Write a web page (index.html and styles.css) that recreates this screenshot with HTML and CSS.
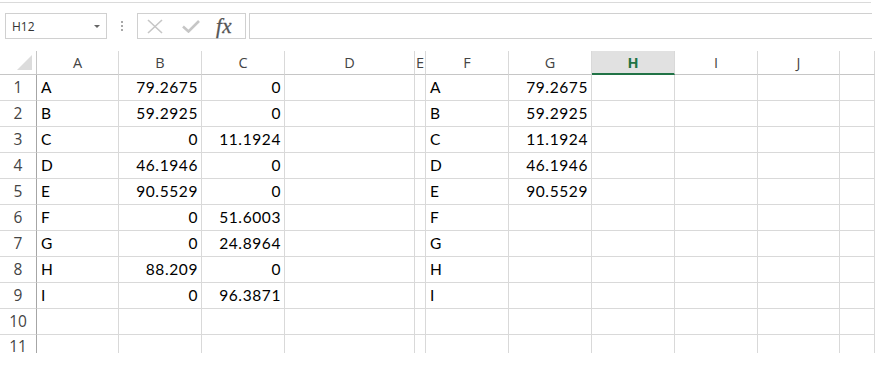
FILE: index.html
```html
<!DOCTYPE html>
<html lang="en">
<head>
    <meta charset="UTF-8">
    <title>Sheet1</title>
    <link rel="stylesheet" href="styles.css">
</head>
<body>
    <div class="topline"></div>

    <!-- 名称框 + 编辑栏 -->
    <div class="formulaBar">
        <div class="nameBox">
            <span class="nameText">H12</span>
            <span class="caret"></span>
        </div>
        <div class="grip"><i></i><i></i><i></i></div>
        <div class="fxBox">
            <svg class="ico" width="16" height="15" viewBox="0 0 16 15">
                <path d="M1 1 L15 14 M15 1 L1 14" stroke="#c6c6c6" stroke-width="1.6" fill="none"/>
            </svg>
            <svg class="ico" width="18" height="13" viewBox="0 0 18 13">
                <path d="M1 6.5 L6.5 11.5 L17 1" stroke="#c6c6c6" stroke-width="2.6" fill="none"/>
            </svg>
            <span class="fx">fx</span>
        </div>
        <div class="formulaInput"></div>
    </div>

    <div class="sheet">
        <div class="row head">
            <div class="corner"><span class="tri"></span></div>
            <div>A</div><div>B</div><div>C</div><div>D</div><div>E</div>
            <div>F</div><div>G</div><div class="sel">H</div><div>I</div><div>J</div><div></div>
        </div>

        <div class="row">
            <div class="rh">1</div><div>A</div><div class="n">79.2675</div><div class="n">0</div><div></div><div></div>
            <div>A</div><div class="n">79.2675</div><div></div><div></div><div></div><div></div>
        </div>
        <div class="row">
            <div class="rh">2</div><div>B</div><div class="n">59.2925</div><div class="n">0</div><div></div><div></div>
            <div>B</div><div class="n">59.2925</div><div></div><div></div><div></div><div></div>
        </div>
        <div class="row">
            <div class="rh">3</div><div>C</div><div class="n">0</div><div class="n">11.1924</div><div></div><div></div>
            <div>C</div><div class="n">11.1924</div><div></div><div></div><div></div><div></div>
        </div>
        <div class="row">
            <div class="rh">4</div><div>D</div><div class="n">46.1946</div><div class="n">0</div><div></div><div></div>
            <div>D</div><div class="n">46.1946</div><div></div><div></div><div></div><div></div>
        </div>
        <div class="row">
            <div class="rh">5</div><div>E</div><div class="n">90.5529</div><div class="n">0</div><div></div><div></div>
            <div>E</div><div class="n">90.5529</div><div></div><div></div><div></div><div></div>
        </div>
        <div class="row">
            <div class="rh">6</div><div>F</div><div class="n">0</div><div class="n">51.6003</div><div></div><div></div>
            <div>F</div><div></div><div></div><div></div><div></div><div></div>
        </div>
        <div class="row">
            <div class="rh">7</div><div>G</div><div class="n">0</div><div class="n">24.8964</div><div></div><div></div>
            <div>G</div><div></div><div></div><div></div><div></div><div></div>
        </div>
        <div class="row">
            <div class="rh">8</div><div>H</div><div class="n">88.209</div><div class="n">0</div><div></div><div></div>
            <div>H</div><div></div><div></div><div></div><div></div><div></div>
        </div>
        <div class="row">
            <div class="rh">9</div><div>I</div><div class="n">0</div><div class="n">96.3871</div><div></div><div></div>
            <div>I</div><div></div><div></div><div></div><div></div><div></div>
        </div>
        <div class="row">
            <div class="rh">10</div><div></div><div></div><div></div><div></div><div></div>
            <div></div><div></div><div></div><div></div><div></div><div></div>
        </div>
        <div class="row last">
            <div class="rh">11</div><div></div><div></div><div></div><div></div><div></div>
            <div></div><div></div><div></div><div></div><div></div><div></div>
        </div>
    </div>
</body>
</html>
```

FILE: styles.css
```css
*{
    margin: 0;
    padding: 0;
    box-sizing: border-box;
}

body{
    background-color: #fff;
    font-family: "Open Sans", "Liberation Sans", sans-serif;
    width: 875px;
    height: 365px;
    overflow: hidden;
}

.topline{
    height: 3px;
    margin-right: 4px;
    border-bottom: 1px solid #dadada;
}

/* 编辑栏 */
.formulaBar{
    display: flex;
    height: 26px;
    margin-top: 10px;
}

.nameBox{
    width: 102px;
    margin-left: 5px;
    border: 1px solid #d0d0d0;
    display: flex;
    align-items: center;
    justify-content: space-between;
    padding: 0 6px 0 6px;
}

.nameText{
    font-size: 12px;
    color: #333;
}

.caret{
    width: 0;
    height: 0;
    border-left: 3px solid transparent;
    border-right: 3px solid transparent;
    border-top: 3px solid #666;
}

.grip{
    width: 30px;
    display: flex;
    flex-direction: column;
    align-items: center;
    justify-content: center;
    gap: 2px;
}

.grip i{
    width: 2px;
    height: 2px;
    background-color: #a8a8a8;
}

.fxBox{
    width: 109px;
    border: 1px solid #d0d0d0;
    display: flex;
    align-items: center;
    padding-left: 9px;
}

.ico:nth-child(2){
    margin-left: 19px;
}

.fx{
    margin-left: 16px;
    font-family: "Liberation Serif", "DejaVu Serif", serif;
    font-style: italic;
    font-size: 21px;
    color: #555;
    letter-spacing: 0.5px;
    line-height: 1;
    -webkit-text-stroke: 0.3px #555;
}

.formulaInput{
    flex: 1;
    margin-left: 3px;
    margin-right: 3px;
    border: 1px solid #d0d0d0;
    border-right: none;
}

/* 表格 */
.sheet{
    margin-top: 12px;
    height: 302px;
    overflow: hidden;
}

.row{
    display: grid;
    grid-template-columns: 37px 82px 83px 83px 130px 11px 83px 83px 83px 83px 82px 1fr;
    height: 26px;
}

.row > div{
    border-right: 1px solid #d9d9d9;
    border-bottom: 1px solid #d9d9d9;
    font-family: Lato, "Liberation Sans", sans-serif;
    font-size: 15.5px;
    letter-spacing: 0.6px;
    color: #000;
    line-height: 25px;
    padding: 0 4px;
    white-space: nowrap;
    overflow: hidden;
}

.row > .n{
    text-align: right;
    padding-right: 3px;
}

.row > .rh{
    border-right-color: #a6a6a6;
    font-family: "Open Sans", "Liberation Sans", sans-serif;
    font-size: 15.5px;
    letter-spacing: 0;
    color: #444;
    text-align: center;
    padding: 0;
}

/* 第11行只露出上半截 */
.last > .rh{
    line-height: 22px;
}

.head{
    height: 24px;
}

.head > div{
    border-bottom-color: #c6c6c6;
    font-family: "Open Sans", "Liberation Sans", sans-serif;
    font-size: 14.5px;
    letter-spacing: 0;
    color: #444;
    text-align: center;
    line-height: 23px;
    padding: 0;
}

.head > .corner{
    border-right-color: #c6c6c6;
    position: relative;
}

.tri{
    position: absolute;
    right: 4px;
    bottom: 4px;
    width: 0;
    height: 0;
    border-left: 15px solid transparent;
    border-bottom: 15px solid #dcdcdc;
}

.head > .sel{
    background-color: #e1e1e1;
    border-bottom: 2px solid #217346;
    color: #217346;
    font-weight: bold;
}
```
